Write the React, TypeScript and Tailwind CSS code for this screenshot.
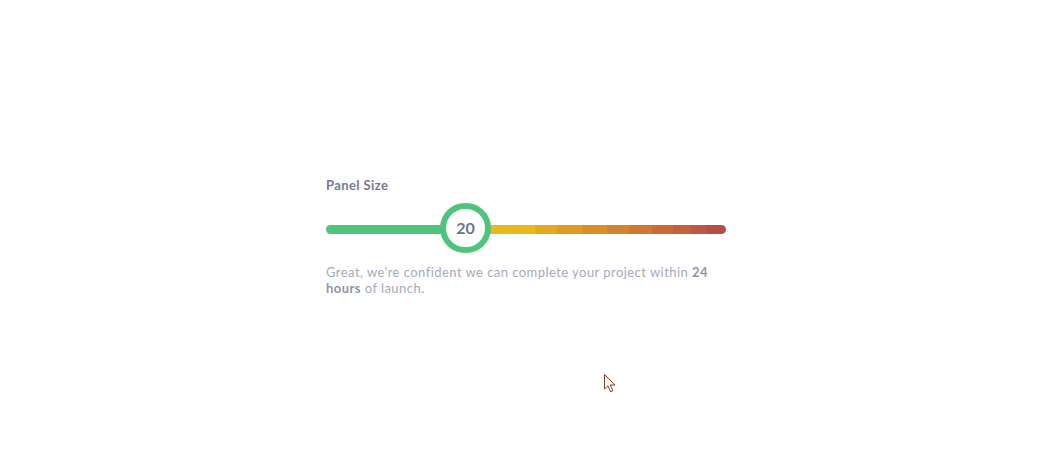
import React from "react";

const segments = [
  { w: 139, c: "#4dc57c" },
  { w: 70, c: "#e7b91b" },
  { w: 22, c: "#e3aa1e" },
  { w: 25, c: "#de9c22" },
  { w: 25, c: "#d98f28" },
  { w: 22, c: "#d4842d" },
  { w: 23, c: "#cf7733" },
  { w: 21, c: "#c96b38" },
  { w: 18, c: "#c4603d" },
  { w: 15, c: "#be5842" },
  { w: 20, c: "#b44f48" },
];

const PanelSlider = ({ value }: { value: number }) => {
  return (
    <div className="w-[400px]">
      <div className="text-[13px] leading-4 font-bold tracking-[0.4px] text-[#737a93]">Panel Size</div>
      <div className="relative mt-[10px] h-[50px] flex items-center">
        <div className="flex w-full h-[9px] mt-[3px] rounded-full overflow-hidden">
          {segments.map((s, i) => (
            <div key={i} className="h-full" style={{ width: s.w, backgroundColor: s.c }} />
          ))}
        </div>
        <div className="absolute left-[114px] top-0 w-[51px] h-[50px] rounded-full border-[6px] border-[#4dc57c] bg-white flex items-center justify-center">
          <span className="text-[16px] font-bold text-[#6b7490]">{value}</span>
        </div>
      </div>
      <p className="mt-[11px] text-[13px] leading-4 tracking-[0.45px] text-[#a6a9bb]">
        Great, we're confident we can complete your project within{" "}
        <b className="font-bold text-[#8f93a8]">24</b>{" "}
        <b className="font-bold text-[#8f93a8]">hours</b> of launch.
      </p>
    </div>
  );
};

export default function App() {
  return (
    <div
      className="relative w-[1047px] h-[461px] bg-white pl-[326px] pt-[177px]"
      style={{ fontFamily: "Lato, 'Liberation Sans', sans-serif" }}
    >
      <PanelSlider value={20} />
      <svg
        className="absolute left-[603px] top-[373px]"
        width="14"
        height="21"
        viewBox="0 0 14 21"
      >
        <path
          d="M1.5 1.5 L1.5 16 L5 12.8 L7.6 18.8 L9.8 17.8 L7.3 12 L12 12 Z"
          fill="white"
          stroke="#8c3b2e"
          strokeWidth="1"
          strokeLinejoin="miter"
        />
      </svg>
    </div>
  );
}
